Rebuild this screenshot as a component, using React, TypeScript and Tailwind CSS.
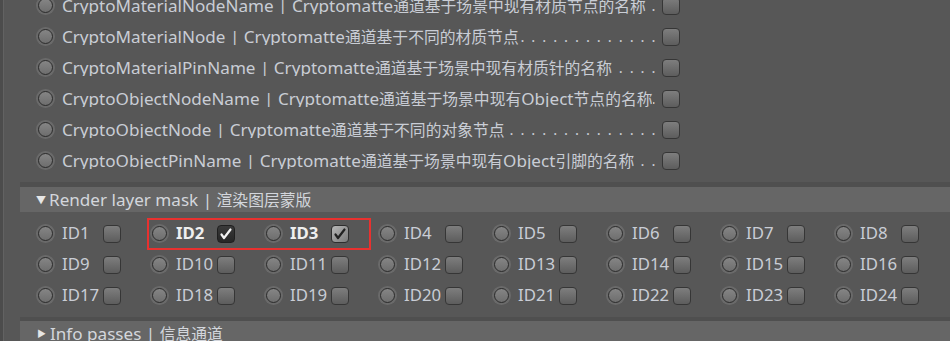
import React from "react";

const FONT = "font-['Noto_Sans','Noto_Sans_CJK_SC',sans-serif]";

function Mixed({ text }: { text: string }) {
  const parts = text.split(/([\u3000-\u9fff\uff00-\uffef]+)/);
  return (
    <>
      {parts.map((p, i) =>
        p === "" ? null : /[\u3000-\u9fff\uff00-\uffef]/.test(p) ? (
          <span key={i} className="text-[15.8px] font-['Noto_Sans_CJK_SC',sans-serif]">
            {p}
          </span>
        ) : (
          <span key={i} className="text-[17.1px]">
            {p}
          </span>
        )
      )}
    </>
  );
}

function Radio() {
  return (
    <div className="w-[19px] h-[19px] shrink-0 rounded-full bg-[#6a6a6a] p-[2px]">
      <div className="w-full h-full rounded-full border-[1.5px] border-[#2b2b2b] bg-gradient-to-b from-[#858585] to-[#6e6e6e]" />
    </div>
  );
}

function Box({ state }: { state?: "dark" | "light" }) {
  if (state === "dark") {
    return (
      <div className="w-[18px] h-[18px] shrink-0 rounded-[4px] border border-[#1f1f1f] bg-gradient-to-b from-[#3a3a3a] to-[#262626] flex items-center justify-center">
        <svg width="14" height="14" viewBox="0 0 14 14">
          <path d="M2.5 7.5 L5 11 L11.5 2.5" fill="none" stroke="#f2f2f2" strokeWidth="2.2" strokeLinecap="round" strokeLinejoin="round" />
        </svg>
      </div>
    );
  }
  if (state === "light") {
    return (
      <div className="w-[18px] h-[18px] shrink-0 rounded-[4px] border border-[#2e2e2e] bg-gradient-to-br from-[#b8b8b8] to-[#7a7a7a] flex items-center justify-center">
        <svg width="14" height="14" viewBox="0 0 14 14">
          <path d="M2.5 7.5 L5 11 L11.5 2.5" fill="none" stroke="#222" strokeWidth="2.2" strokeLinecap="round" strokeLinejoin="round" />
        </svg>
      </div>
    );
  }
  return (
    <div className="w-[18px] h-[18px] shrink-0 rounded-[4px] border border-[#363636] bg-gradient-to-b from-[#7e7e7e] to-[#5d5d5d]" />
  );
}

const listRows = [
  "CryptoMaterialNodeName | Cryptomatte通道基于场景中现有材质节点的名称",
  "CryptoMaterialNode | Cryptomatte通道基于不同的材质节点",
  "CryptoMaterialPinName | Cryptomatte通道基于场景中现有材质针的名称",
  "CryptoObjectNodeName | Cryptomatte通道基于场景中现有Object节点的名称",
  "CryptoObjectNode | Cryptomatte通道基于不同的对象节点",
  "CryptoObjectPinName | Cryptomatte通道基于场景中现有Object引脚的名称",
];

const DOTS = " .".repeat(80);

function ListRow({ text }: { text: string }) {
  return (
    <div className="h-[31px] w-[680px] pl-[36px] flex items-center">
      <Radio />
      <div className="ml-[7px] flex-1 min-w-0 flex items-center text-[#c9cdd5] leading-none">
        <span className="whitespace-nowrap overflow-hidden">
          <Mixed text={text} />
        </span>
        <span className="flex-1 min-w-0 overflow-hidden flex justify-end pr-[5px] text-[15px]">
          <span className="whitespace-nowrap tracking-[1.5px]">{DOTS}</span>
        </span>
      </div>
      <Box />
    </div>
  );
}

function IdCell({ n }: { n: number }) {
  const bold = n === 2 || n === 3;
  return (
    <div className="w-[114px] shrink-0 flex items-center">
      <Radio />
      <span
        className={
          "ml-[7px] w-[41px] whitespace-nowrap text-[16.8px] leading-none " +
          (bold ? "font-bold text-[#eeeeee]" : "text-[#c9cdd5]")
        }
      >
        ID{n}
      </span>
      <Box state={n === 2 ? "dark" : n === 3 ? "light" : undefined} />
    </div>
  );
}

export default function App() {
  return (
    <div className={`w-[950px] h-[341px] overflow-hidden bg-[#575757] relative ${FONT}`}>
      <div className="absolute left-0 top-0 bottom-0 w-[3px] bg-[#4c4c4c]" />
      <div className="absolute left-[3px] top-0 bottom-0 w-[1px] bg-[#626262]" />
      <div className="-mt-[10px]">
        {listRows.map((t) => (
          <ListRow key={t} text={t} />
        ))}
      </div>
      <div className="ml-[20px] h-[5px] mt-[6px] bg-[#4f4f4f]" />
      <div className="ml-[20px] h-[25px] bg-[#666666] flex items-center pl-[16px] text-[#d3d6dc] leading-none">
        <span className="text-[10px] text-[#e6e6e6] mr-[3px]">▼</span>
        <span className="whitespace-nowrap">
          <Mixed text="Render layer mask | 渲染图层蒙版" />
        </span>
      </div>
      <div className="relative pt-[6px]">
        {[0, 1, 2].map((r) => (
          <div key={r} className="h-[31px] pl-[36px] flex items-center">
            {[1, 2, 3, 4, 5, 6, 7, 8].map((c) => (
              <IdCell key={c} n={r * 8 + c} />
            ))}
          </div>
        ))}
        <div className="absolute left-[147px] top-[6px] w-[224px] h-[32px] border-2 border-[#e8312f]" />
      </div>
      <div className="ml-[20px] h-[4px] mt-[6px] bg-[#4f4f4f]" />
      <div className="ml-[20px] h-[25px] bg-[#666666] flex items-center pl-[17px] text-[#d3d6dc] leading-none">
        <span className="text-[9px] text-[#e6e6e6] mr-[4px]">▶</span>
        <span className="whitespace-nowrap">
          <Mixed text="Info passes | 信息通道" />
        </span>
      </div>
    </div>
  );
}
